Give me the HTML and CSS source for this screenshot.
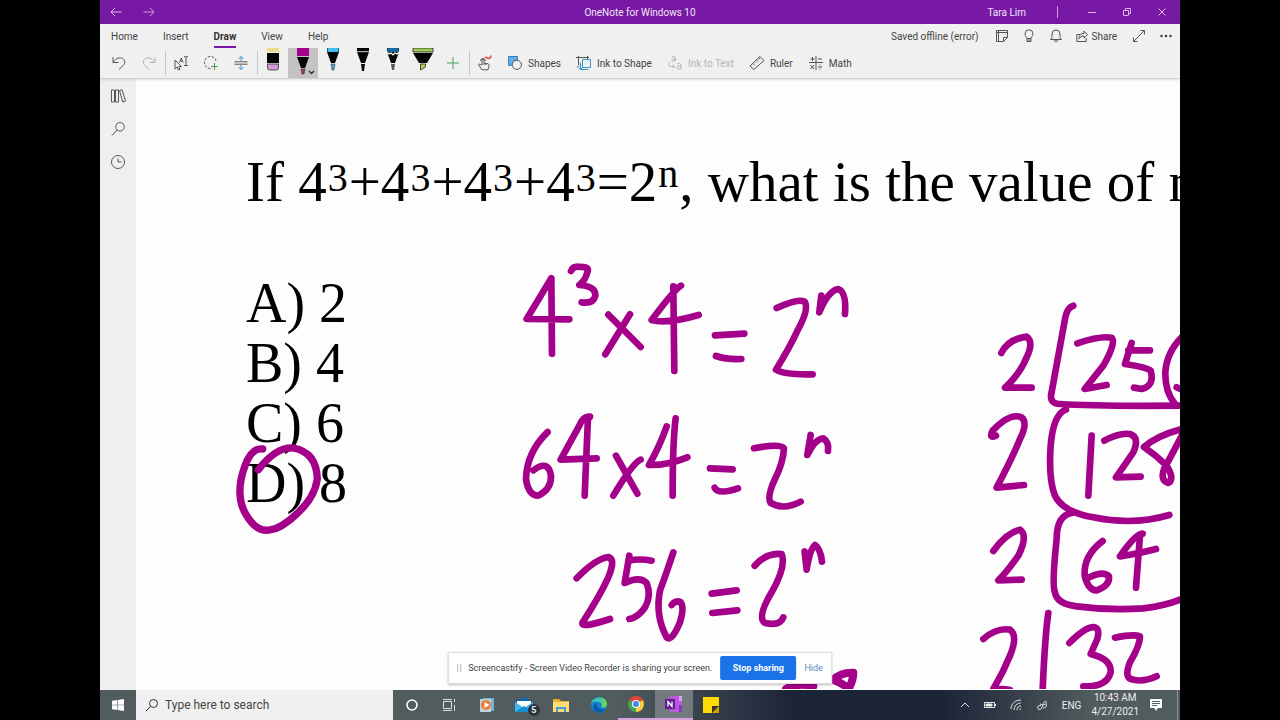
FILE: index.html
```html
<!DOCTYPE html>
<html lang="en">
<head>
    <meta charset="UTF-8">
    <meta name="viewport" content="width=device-width, initial-scale=1.0">
    <title>OneNote for Windows 10</title>
    <link rel="stylesheet" href="styles.css">
</head>
<body>
<div class="desktop">

    <!-- Title bar -->
    <header class="titlebar">
        <div class="title-nav">
            <button aria-label="Back"><svg width="12" height="12" viewBox="0 0 12 12"><path d="M11.500 6H1M5 2 1 6l4 4"/></svg></button>
            <button class="faded" aria-label="Forward"><svg width="12" height="12" viewBox="0 0 12 12"><path d="M.5 6H11M7 2l4 4-4 4"/></svg></button>
        </div>
        <span class="app-title">OneNote for Windows 10</span>
        <div class="window-controls">
            <span class="user-name">Tara Lim</span>
            <span class="title-divider"></span>
            <button aria-label="Minimize"><svg width="10" height="10" viewBox="0 0 10 10"><path d="M1 5.500h8"/></svg></button>
            <button aria-label="Restore"><svg width="10" height="10" viewBox="0 0 10 10"><path d="M1.500 3.500h5v5h-5zM3.500 3V1.500h5v5H7"/></svg></button>
            <button aria-label="Close"><svg width="10" height="10" viewBox="0 0 10 10"><path d="M1.500 1.500l7 7M8.500 1.500l-7 7"/></svg></button>
        </div>
    </header>

    <!-- Ribbon -->
    <div class="ribbon">
        <div class="tab-row">
            <nav class="tabs">
                <button>Home</button>
                <button>Insert</button>
                <button class="active">Draw</button>
                <button>View</button>
                <button>Help</button>
            </nav>
            <div class="status">
                <span class="save-state">Saved offline (error)</span>
                <button class="status-icon" aria-label="Feed"><svg width="14" height="14" viewBox="0 0 14 14"><path d="M1.500 1.500h11v7l-4 4h-7zM3.500 1.500v11M1.500 3.500h11M12.500 8.500h-4v4"/></svg></button>
                <button class="status-icon" aria-label="Tips"><svg width="14" height="14" viewBox="0 0 14 14"><path d="M5 9.500C5 8 3 7.200 3 4.800a4 4 0 0 1 8 0C11 7.200 9 8 9 9.500zM5 9.500v3h4v-3M5.500 11h3"/></svg></button>
                <button class="status-icon" aria-label="Notifications"><svg width="14" height="14" viewBox="0 0 14 14"><path d="M1.500 10.500h11L11 8.500V5a4 4 0 0 0-8 0v3.500zM5.500 11a1.500 1.500 0 0 0 3 0"/></svg></button>
                <button class="share"><svg width="12" height="14" viewBox="0 0 12 14"><path d="M4 5.500H.8v7h9.400V9M3 10c0-4 2-5.500 5-5.500V2l3.500 3.800L8 9V7C5.500 7 4 8 3 10z"/></svg>Share</button>
                <button class="status-icon expand" aria-label="Full screen"><svg width="14" height="14" viewBox="0 0 14 14"><path d="M2 12 12 2M8.500 1.500h4v4M1.500 8.500v4h4"/></svg></button>
                <button class="status-icon" aria-label="More"><svg width="14" height="14" viewBox="0 0 14 14"><g fill="#333" stroke="none"><circle cx="2.500" cy="7" r="1.200"/><circle cx="7" cy="7" r="1.200"/><circle cx="11.500" cy="7" r="1.200"/></g></svg></button>
            </div>
        </div>

        <div class="toolbar">
            <button class="tool" aria-label="Undo"><svg width="16" height="16" viewBox="0 0 16 16"><path d="M2 2v5.500h5.500M2.200 7.200C5 3 9 2 11.600 3.500c3 1.800 2.600 5 .5 7L8 14.500"/></svg></button>
            <button class="tool disabled" aria-label="Redo"><svg width="16" height="16" viewBox="0 0 16 16"><path d="M14 2v5.500H8.500M13.800 7.200C11 3 7 2 4.400 3.500c-3 1.800-2.600 5-.5 7L8 14.500"/></svg></button>
            <span class="separator"></span>
            <button class="tool" aria-label="Select objects or type text"><svg width="16" height="16" viewBox="0 0 16 16"><path d="M2 5v9l2.200-2 1.300 3 1.500-.7-1.300-2.800H8.500zM6.500 7.500 8.300 3l1.700 4.500M7 6h2.500M11 1.500c1 0 1.500.2 2 .7.500-.5 1-.7 2-.7M13 2v8M11 10.500h4"/></svg></button>
            <button class="tool" aria-label="Lasso select"><svg width="16" height="16" viewBox="0 0 16 16"><path stroke-dasharray="2.500 1.500" d="M13 6C12.500 3 10 1.500 7.500 1.500 4 1.500 1.500 4 1.500 7.500S4 13.500 7.500 13.500"/><path class="green" d="M11.500 8v7M8 11.500h7"/></svg></button>
            <button class="tool" aria-label="Insert space"><svg width="16" height="16" viewBox="0 0 16 16"><path d="M1.500 6.800h13M1.500 9.200h13"/><path class="blue" d="M8 6V1.500M5.500 4 8 1.500 10.500 4M8 10v4.500M5.500 12 8 14.500l2.500-2.500"/></svg></button>
            <span class="separator"></span>

            <button class="tool pen" aria-label="Eraser"><svg width="30" height="30" viewBox="0 0 30 30"><path class="ink-black" d="M9 5h12v10H9z"/><path fill="#efdc8c" d="M9 0h12v4H9z"/><path fill="#d29bd4" stroke="#333" stroke-width=".8" d="M9.500 16h11v4q0 2-2 2h-7q-2 0-2-2z"/></svg></button>
            <button class="tool pen selected" aria-label="Purple pen"><svg width="30" height="30" viewBox="0 0 30 30"><path fill="#a4008a" d="M9 0h12v8H9z"/><path class="ink-black" d="M9 9h12l-4 11h-4z"/><path fill="#9c3b72" stroke="#333" stroke-width=".6" d="M13 21h4l-1 5h-2z"/><path fill="none" stroke="#222" stroke-width="1.200" d="m21 23 2.500 2.500L26 23"/></svg></button>
            <button class="tool pen" aria-label="Blue pen"><svg width="30" height="30" viewBox="0 0 30 30"><path class="ink-black" d="M9 0h12v4l-4 11h-4L9 4z"/><path fill="#42bdf0" d="M9.500 0h11v4h-11z"/><path fill="#48a3ba" stroke="#345" stroke-width=".6" d="M13 16h4l-1 6h-2z"/></svg></button>
            <button class="tool pen" aria-label="Black pen"><svg width="30" height="30" viewBox="0 0 30 30"><path class="ink-black" d="M9 0h12v4l-4 11h-4L9 4zM13 16h4l-1 7h-2z"/><path fill="#aaa" d="M9 3h12v1.200H9z"/></svg></button>
            <button class="tool pen" aria-label="Galaxy pen"><svg width="30" height="30" viewBox="0 0 30 30"><path class="ink-black" d="M9 0h12v4l-4 11h-4L9 4z"/><path fill="#176ba0" d="M9.500 0h11v4h-11z"/><path fill="none" stroke="#fff" stroke-width="1.200" d="m9 4 2 2 2-1 2 2 2-2 2 1 2-2"/><path fill="#555" d="M13 16h4l-1 6h-2z"/></svg></button>
            <button class="tool pen" aria-label="Highlighter"><svg width="30" height="30" viewBox="0 0 30 30"><path fill="#9dcc57" stroke="#222" stroke-width=".8" d="M5 0h20v4H5z"/><path class="ink-black" d="M5 5h20l-6 10h-8z"/><path fill="#c5cd55" stroke="#222" stroke-width=".8" d="M12.500 16h5v3l-5 3z"/></svg></button>
            <button class="tool" aria-label="Add pen"><svg width="16" height="16" viewBox="0 0 16 16"><path class="green" d="M8 2v12M2 8h12"/></svg></button>
            <span class="separator"></span>

            <button class="tool" aria-label="Draw with touch"><svg width="16" height="16" viewBox="0 0 16 16"><path d="M5 10V4.500q1-1.500 2 0V8l4 .8q1.500.5 1 2.500l-1 3.500H5l-3.500-5Q2 8 5 10.500M7 8v2M9 8.500V10M3.500 6a2.500 2.500 0 1 1 5 0"/><path stroke="#e44" stroke-width="1.500" d="M8 2.500c2-1.500 2.500 2 4.500.8 1.200-.6 1.500-1.500 1.500-2.800"/></svg></button>
            <div class="labelled-tools">
                <button><svg width="16" height="16" viewBox="0 0 16 16"><path fill="#64aee5" stroke="#3481bd" d="M1.500 1.500h9v3l-6 6h-3z"/><circle cx="9.800" cy="9.800" r="4.600" fill="#f0f0f0"/></svg>Shapes</button>
                <button><svg width="16" height="16" viewBox="0 0 16 16"><path d="M0 2.500h13M2.500 1v9M11.500 1v3M1 12.500l2-2"/><path class="blue" d="M6.500 4.500h8v8h-8zM4.500 7.500v7h8M2.500 12.500l2 2 2-2"/></svg>Ink to Shape</button>
                <button class="disabled" disabled><svg width="16" height="16" viewBox="0 0 16 16"><path d="M5 2q3-1.500 3.500.5V6M8.500 4C4 3 4 6.500 6.500 6L8.500 5M10 9q3.500-1.500 4 .5v5M14 11c-5-1-5 3.500-2 3.200L14 13M3 7c-2 1.500-2 3 0 4.500H7M5.500 9.500l2 2-2 2"/></svg>Ink to Text</button>
                <button><svg width="16" height="16" viewBox="0 0 16 16"><path d="m1 11 10-9.500L15 5.500 5 14.500zM4 8.500l1.500 1.500M6 6.500l1.200 1.200M8 4.800l1.500 1.500M10 3l1.200 1.200"/></svg>Ruler</button>
                <button><svg width="16" height="16" viewBox="0 0 16 16"><path d="M1 7.500h14M8 1v14M2.500 4h4M4.500 2v4M10 4h4M2.500 10l3.500 4M6 10l-3.500 4M10 12h4M12 9.500v1M12 13.500v1"/></svg>Math</button>
            </div>
        </div>
    </div>

    <!-- Notebook page -->
    <div class="workspace">
        <aside class="sidebar">
            <button aria-label="Show navigation"><svg width="16" height="16" viewBox="0 0 16 16"><path d="M1.500 2h3v12h-3zM5.500 2h3v12h-3zM9.500 2.500l2.500-.8L15.500 13l-2.800 1z"/></svg></button>
            <button aria-label="Search"><svg width="16" height="16" viewBox="0 0 16 16"><circle cx="10" cy="5.800" r="4.300"/><path d="M7 9 2 14.500"/></svg></button>
            <button aria-label="Recent notes"><svg width="16" height="16" viewBox="0 0 16 16"><circle cx="8" cy="8" r="6.500"/><path d="M8 4.500V8h3.500"/></svg></button>
        </aside>

        <main class="page">
            <p class="question">If 4<sup>3</sup>+4<sup>3</sup>+4<sup>3</sup>+4<sup>3</sup>=2<sup class="power">n</sup>, what is the value of n?</p>
            <ul class="answers">
                <li>A) 2</li>
                <li>B) 4</li>
                <li>C) 6</li>
                <li>D) 8</li>
            </ul>

            <!-- Handwriting -->
            <svg class="ink" width="1044" height="610" viewBox="136 80 1044 610" aria-hidden="true">
                <!-- circled answer -->
                <g stroke-width="22" transform="translate(220 400) scale(.3333)">
                    <path d="M128 150Q95 145 75 200Q42 290 80 350Q110 400 150 393Q185 388 230 345Q285 295 292 240Q290 160 220 147Q170 142 115 212"/>
                </g>
                <!-- 4^3 x 4 = 2^n, 64 x 4 = 2^n -->
                <g transform="translate(500 250) scale(.3333)">
                    <path d="M154 88 80 210 208 211M154 88 156 314"/>
                    <path d="M213 66Q220 50 240 54Q270 52 262 70Q256 95 238 108Q288 112 286 140Q280 165 245 160"/>
                    <path d="M325 197 422 294M390 196 316 316"/>
                    <path d="M543 110Q525 120 455 213Q500 226 596 198M520 112 523 366"/>
                    <path d="M645 259 733 254M648 321Q680 332 724 330"/>
                    <path d="M830 177Q895 147 914 158Q928 180 895 240Q870 295 828 362Q850 378 938 376"/>
                    <path d="M964 140 958 190Q985 125 1015 120Q1040 130 1035 195"/>
                    <path d="M143 549Q80 610 78 690Q85 740 115 740Q155 720 153 680Q145 630 100 664"/>
                    <path d="M270 503Q250 500 238 530L182 632 290 628M264 505 254 740"/>
                    <path d="M348 620 412 734M422 632Q400 640 340 740"/>
                    <path d="M500 532Q480 590 447 648Q500 650 562 625M527 508Q518 580 518 740"/>
                    <path d="M630 658 698 661M644 716Q655 738 714 718"/>
                    <path d="M762 598Q840 583 852 598Q850 640 825 690Q800 745 812 762Q850 785 902 758"/>
                    <path d="M932 558 922 618Q945 570 970 568Q988 580 984 606"/>
                </g>
                <!-- 256 = 2^n -->
                <g transform="translate(500 500) scale(.3333)">
                    <path d="M230 238Q285 180 325 174Q348 180 325 235Q300 290 248 370Q240 390 330 360"/>
                    <path d="M388 170 374 252Q420 230 440 252Q455 290 435 325Q415 355 388 360M385 185Q420 178 455 185"/>
                    <path d="M520 160Q500 220 480 275Q465 350 500 415Q515 430 540 370Q555 320 540 308Q525 305 515 318"/>
                    <path d="M635 284 710 274M637 342 712 334"/>
                    <path d="M764 200Q800 160 845 165Q860 200 815 280Q770 355 795 372Q840 382 850 355"/>
                    <path d="M914 158 920 212Q930 150 945 138Q962 150 966 188"/>
                    <path stroke-width="24" d="M858 570Q895 550 940 562M1060 521Q1020 520 1000 543Q1035 555 1050 575M1060 521Q1060 545 1045 570"/>
                </g>
                <!-- division ladder: 256, 128 -->
                <g transform="translate(960 290) scale(.3333)">
                    <path d="M124 192Q145 150 200 143Q222 160 200 205Q180 255 135 296L215 296"/>
                    <path d="M340 50Q322 55 316 85L273 320Q272 345 300 345Q400 352 665 350"/>
                    <path d="M352 163Q420 140 455 146Q470 160 430 230L374 300 440 288"/>
                    <path d="M515 162 495 225Q560 235 572 245Q585 290 545 300L522 296M505 184 570 184"/>
                    <path d="M665 145Q620 190 616 250Q615 310 645 345M650 295 665 302"/>
                    <path d="M108 440Q85 450 98 425Q150 370 184 385Q205 400 180 450Q160 500 110 596L192 588"/>
                    <path d="M318 362Q280 375 272 470Q265 570 285 620Q310 670 400 685Q520 710 628 678"/>
                    <path d="M395 440 385 620"/>
                    <path d="M433 455Q480 430 510 435Q540 445 520 490L468 565 542 563"/>
                    <path d="M665 420Q590 440 552 474Q590 500 620 530Q645 570 625 582Q600 575 612 540Q650 470 665 440"/>
                </g>
                <!-- division ladder: 64, 32 -->
                <g transform="translate(960 490) scale(.3333)">
                    <path d="M100 186Q140 130 180 122Q205 140 175 200Q140 250 115 274L185 272"/>
                    <path d="M335 72Q290 80 290 150Q275 290 285 310Q290 345 350 352Q450 365 550 358Q620 350 665 330"/>
                    <path d="M428 156Q370 200 374 260Q385 305 410 304Q450 290 447 262Q430 245 390 264"/>
                    <path d="M548 134Q530 130 480 202Q530 195 588 180M540 140 528 296"/>
                    <path d="M70 450Q110 415 150 422Q175 440 150 500Q130 550 100 600M110 602Q125 598 150 603"/>
                    <path d="M265 372Q255 440 248 602"/>
                    <path d="M328 462Q380 410 405 415Q420 420 412 450L392 495Q455 510 452 550Q440 595 370 592"/>
                    <path d="M465 446Q520 435 540 442Q540 470 510 520Q490 570 520 572Q550 580 590 562"/>
                </g>
            </svg>
        </main>
    </div>

    <!-- Screen sharing notice -->
    <div class="share-notice">
        <span class="grip"></span>
        <span class="notice-text">Screencastify - Screen Video Recorder is sharing your screen.</span>
        <button class="stop">Stop sharing</button>
        <a href="#">Hide</a>
    </div>

    <!-- Taskbar -->
    <footer class="taskbar">
        <button class="start" aria-label="Start"><svg width="12" height="12" viewBox="0 0 12 12"><path fill="#fff" d="M0 1.700 5.400 1v4.700H0zM6 .9 12 0v5.700H6zM0 6.300h5.400V11L0 10.300zM6 6.300h6V12l-6-.9z"/></svg></button>
        <label class="search">
            <svg width="14" height="14" viewBox="0 0 14 14"><circle cx="8.500" cy="5.500" r="4"/><path d="M5.500 8.500 1 13"/></svg>
            <input type="text" placeholder="Type here to search" aria-label="Search">
        </label>
        <div class="pinned">
            <button aria-label="Cortana"><svg width="16" height="16" viewBox="0 0 16 16"><circle cx="8" cy="8" r="5" fill="none" stroke="#fff" stroke-width="1.600"/></svg></button>
            <button aria-label="Task view"><svg width="16" height="16" viewBox="0 0 16 16"><path fill="none" stroke="#ddd" d="M2.500 4.500h8v7h-8zM2.500 2v1M10.500 2v1M2 2.500h9M2 13.500h9M13.500 2v3M13.500 8v6"/></svg></button>
            <button aria-label="Media player"><svg width="18" height="18" viewBox="0 0 18 18"><path fill="#75b5cf" d="M5 2h11v13H5z"/><path fill="#b9d5df" d="M2 3h11v13H2z"/><circle cx="8" cy="9" r="5" fill="#f07b37"/><path fill="#fff" d="m6.500 6 5 3-5 3z"/></svg></button>
            <button class="mail" aria-label="Mail"><svg width="20" height="18" viewBox="0 0 20 18"><path fill="#0869b4" d="M1 6 10 1l9 5v10H1z"/><path fill="#fff" d="M3 5h14v6H3z"/><path fill="#43b5ef" d="m1 6 9 6 9-6v10H1z"/><path fill="#168ed5" d="m1 16 9-6 9 6z"/></svg><span class="badge">5</span></button>
            <button aria-label="File explorer"><svg width="18" height="18" viewBox="0 0 18 18"><path fill="#e9ad31" d="M1 3h6l2 2h8v4H1z"/><path fill="#ffdc76" d="M1 6h16v10H1z"/><path fill="#3d99cf" d="M4 11h10v5h-2v-3H6v3H4z"/></svg></button>
            <button aria-label="Edge"><svg width="18" height="18" viewBox="0 0 18 18"><circle cx="9" cy="9" r="8" fill="#1482cf"/><path fill="#3fc3b2" d="M1 8C2 0 16-1 17 8c0 3-3 4-6 3 2-2 0-5-3-5-3-1-6 0-7 2z"/><path fill="#67d65c" d="M11 1.500c4 1 6 4 6 6.500 0 3-3 4-6 3 3-2 2-6 0-9.500z"/><path fill="#0c5bad" d="M8 7c-3 3 0 7 7 6-3 5-9 4-11 1-2-4 1-7 4-7z"/></svg></button>
            <button class="running" aria-label="Chrome"><svg width="18" height="18" viewBox="0 0 18 18"><path fill="#e44537" d="M9 9 2.100 5A8 8 0 0 1 15.900 5z"/><path fill="#f8cc3c" d="M9 9 15.900 5A8 8 0 0 1 9 17z"/><path fill="#43a653" d="M9 9v8A8 8 0 0 1 2.100 5z"/><circle cx="9" cy="9" r="4" fill="#fff"/><circle cx="9" cy="9" r="3" fill="#4387ed"/></svg></button>
            <button class="running current" aria-label="OneNote"><svg width="18" height="18" viewBox="0 0 18 18"><path fill="#b958da" d="M5 1h12v16H5z"/><path fill="#dc9df1" d="M14 1h3v5h-3z"/><path fill="#8d36bd" d="M14 10h3v7h-3z"/><path fill="#631b91" d="M0 4h10v10H0z"/><path fill="none" stroke="#fff" stroke-width="1.300" d="M3 11.500v-5l4 5v-5"/></svg></button>
            <button aria-label="Sticky Notes"><svg width="18" height="18" viewBox="0 0 18 18"><path fill="#ffdd00" d="M1 1h16v9H10v7H1z"/><path fill="#333" d="M10 10h7l-7 7z"/><path fill="#d5a300" d="M17 10v7h-7z"/></svg></button>
        </div>
        <div class="tray">
            <svg width="10" height="14" viewBox="0 0 10 14"><path d="m1 9 4-4 4 4"/></svg>
            <svg width="12" height="14" viewBox="0 0 12 14"><path d="M.5 4.500h10v5H.5zM11.500 6v2"/><path fill="#fff" d="M2 6h6v2H2z"/></svg>
            <svg width="12" height="14" viewBox="0 0 12 14"><path d="M1 11C1 6 5 2 11 2M4 12c0-4 3-7 7-7M7 12c0-2.500 1.500-4 4-4M10 12v-1h1"/></svg>
            <svg width="12" height="14" viewBox="0 0 12 14"><path d="M5 8a2 2 0 1 0-1 3.500C7 11 6 5 9 3.500c2-.5 2 2 0 3C7 8 5 6 4 6M7 10c3 0 4-2 3-4"/></svg>
            <span>ENG</span>
            <div class="clock"><span>10:43 AM</span><span>4/27/2021</span></div>
            <svg width="14" height="14" viewBox="0 0 14 14"><path fill="#fff" stroke="none" d="M1 1h12v9H9l-2 3-1.500-3H1z"/><path stroke="#566062" d="M3 3.500h8M3 5.500h8M3 7.500h5"/></svg>
            <span class="show-desktop"></span>
        </div>
    </footer>
</div>
</body>
</html>
```
FILE: styles.css
```css
* {
    box-sizing: border-box;
}
body {
    margin: 0;
    background: #000;
    font-family: Roboto, "Noto Sans", sans-serif;
    font-size: 10px;
    color: #444;
}
button {
    padding: 0;
    border: 0;
    background: none;
    font: inherit;
    color: inherit;
    display: flex;
    align-items: center;
    justify-content: center;
}
svg {
    display: block;
    flex: none;
    fill: none;
    stroke: #555;
}
.desktop {
    position: relative;
    display: flex;
    flex-direction: column;
    height: 100vh;
    margin: 0 100px;
    overflow: hidden;
    background: #fdfdfd;
}

/* Title bar */
.titlebar {
    display: grid;
    grid-template-columns: 1fr auto 1fr;
    align-items: center;
    height: 24px;
    background: #7719a5;
    color: #f3e4f8;
}
.titlebar svg {
    stroke: #e3b8f0;
}
.title-nav {
    display: flex;
    gap: 21px;
    padding-left: 10px;
}
.faded {
    opacity: 0.8;
}
.window-controls {
    display: flex;
    align-items: center;
    justify-content: flex-end;
    padding-right: 13px;
}
.title-divider {
    width: 1px;
    height: 12px;
    margin: 0 29px 0 31px;
    background: #cf94df;
}
.window-controls button + button {
    margin-left: 25px;
}

/* Ribbon */
.ribbon {
    position: relative;
    background: #f0f0f0;
    border-bottom: 1px solid #cfcfcf;
    box-shadow: 0 1px 3px rgba(0, 0, 0, 0.12);
}
.tab-row {
    display: flex;
    justify-content: space-between;
    height: 24px;
}
.tabs {
    display: flex;
    gap: 25px;
    padding-left: 11px;
}
.tabs .active {
    font-weight: 700;
    color: #333;
    box-shadow: inset 0 -2px #7719a5;
}
.status {
    display: flex;
    align-items: center;
    gap: 13px;
    padding-right: 7px;
}
.save-state {
    margin-right: 3px;
}
.share {
    gap: 4px;
}
.expand {
    margin-left: 2px;
}
.toolbar {
    display: flex;
    align-items: center;
    height: 30px;
    padding-left: 4px;
}
.tool {
    width: 30px;
    height: 30px;
}
.pen svg {
    stroke: none;
}
.ink-black {
    fill: #050505;
}
.selected {
    background: #c5c2c2;
}
.separator {
    width: 2px;
    height: 24px;
    border-right: 1px solid #c6c6c6;
}
.green {
    stroke: #45a35b;
}
.blue {
    stroke: #3899c9;
}
.disabled {
    color: #b4b4b4;
}
.disabled svg {
    stroke: #b4b4b4;
}
.labelled-tools {
    display: flex;
    gap: 15px;
    padding-left: 7px;
}
.labelled-tools button {
    gap: 5px;
}

/* Notebook page */
.workspace {
    display: flex;
    flex: 1;
    min-height: 0;
}
.sidebar {
    flex: none;
    width: 36px;
    padding-top: 9px;
    background: #efefef;
}
.sidebar button {
    width: 36px;
    height: 16px;
    margin-bottom: 17px;
}
.page {
    position: relative;
    flex: 1;
    min-width: 0;
    overflow: hidden;
    padding: 72px 0 0 110px;
    font-family: "Liberation Serif", serif;
    color: #000;
}
.question {
    margin: 0 0 60px;
    font-size: 57px;
    line-height: 62px;
    white-space: nowrap;
}
.question sup {
    position: relative;
    bottom: 10px;
    padding: 0 1px;
    font-size: 40px;
    line-height: 1;
    vertical-align: baseline;
}
.question .power {
    bottom: 14px;
}
.answers {
    margin: 0;
    padding: 0;
    list-style: none;
    font-size: 56px;
    line-height: 60px;
}
.ink {
    position: absolute;
    top: 0;
    left: 0;
    stroke: #a4008a;
    stroke-width: 20;
    stroke-linecap: round;
    stroke-linejoin: round;
}

/* Screen sharing notice */
.share-notice {
    position: absolute;
    left: 50%;
    bottom: 36px;
    transform: translateX(-50%);
    display: flex;
    align-items: center;
    height: 32px;
    padding: 0 8px;
    background: #fff;
    border: 1px solid #ddd;
    box-shadow: 0 1px 2px rgba(0, 0, 0, 0.25);
    font-size: 9px;
    white-space: nowrap;
}
.grip {
    width: 4px;
    height: 8px;
    margin-right: 7px;
    border: solid #bbb;
    border-width: 0 1px;
}
.stop {
    width: 76px;
    height: 24px;
    margin: 0 8px;
    border-radius: 2px;
    background: #1a73e8;
    color: #fff;
    font-weight: 700;
}
.share-notice a {
    color: #5a8ac0;
    text-decoration: none;
}

/* Taskbar */
.taskbar {
    display: flex;
    flex: none;
    height: 30px;
    background: linear-gradient(90deg, #515c5e 48%, #1c2438 64%, #1c2438 78%, #515c5e 92%);
    color: #eee;
}
.taskbar svg {
    stroke: none;
}
.start {
    width: 36px;
}
.search {
    display: flex;
    align-items: center;
    gap: 6px;
    width: 257px;
    padding-left: 9px;
    background: #f0f0f0;
}
.taskbar .search svg {
    stroke: #333;
}
.search input {
    flex: 1;
    min-width: 0;
    padding: 0;
    border: 0;
    background: none;
    font: inherit;
    font-size: 12px;
}
.search input::placeholder {
    color: #444;
    opacity: 1;
}
.pinned {
    display: grid;
    grid-template-columns: repeat(9, 1fr);
    width: 337px;
}
.running {
    border-bottom: 2px solid #d7a3dc;
}
.current {
    background: #747b80;
}
.mail {
    position: relative;
}
.badge {
    position: absolute;
    right: 3px;
    bottom: 4px;
    width: 12px;
    height: 12px;
    border-radius: 50%;
    background: #2b333c;
    font-size: 9px;
    font-weight: 700;
    line-height: 12px;
}
.tray {
    display: flex;
    align-items: center;
    gap: 14px;
    margin-left: auto;
}
.taskbar .tray svg {
    stroke: #e4e4e4;
}
.clock {
    display: flex;
    flex-direction: column;
    align-items: center;
    line-height: 14px;
    margin: 0 -4px;
}
.show-desktop {
    width: 3px;
    height: 30px;
    border-left: 1px solid #899194;
}
```
